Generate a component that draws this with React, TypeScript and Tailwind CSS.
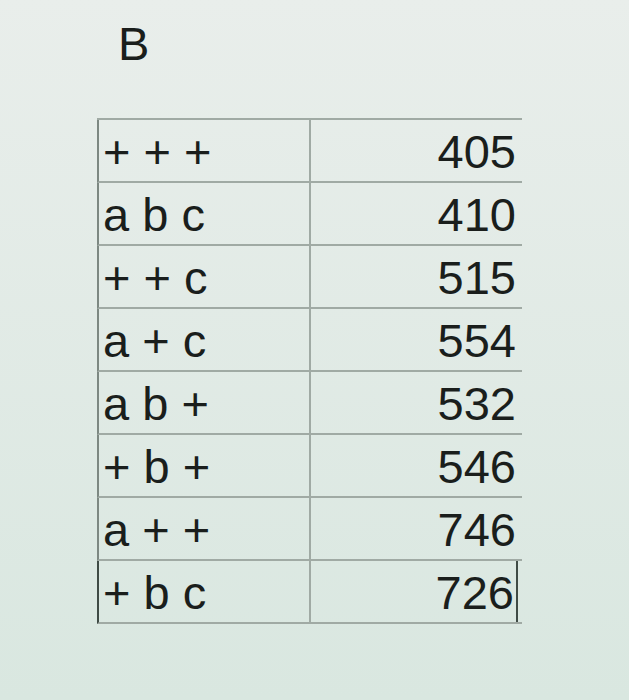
import React from 'react';

const rows: [string, string][] = [
  ['+ + +', '405'],
  ['a b c', '410'],
  ['+ + c', '515'],
  ['a + c', '554'],
  ['a b +', '532'],
  ['+ b +', '546'],
  ['a + +', '746'],
  ['+ b c', '726'],
];

const App: React.FC = () => {
  return (
    <div className="min-h-screen w-full bg-gradient-to-b from-[#e9eeeb] to-[#d9e7e0] text-[#1a1e1c] font-['Liberation_Sans',Arial,sans-serif]">
      {/* heading */}
      <div className="pt-[16px] pl-[118px] text-[47px] leading-[56px]">B</div>

      {/* table */}
      <div className="mt-[46px] ml-[97px] w-[425px] border-t-2 border-[#a0aaa4]">
        {rows.map(([label, value], i) => {
          const last = i === rows.length - 1;
          return (
            <div
              key={i}
              className={`grid grid-cols-[212px_211px] h-[63px] border-b-2 border-b-[#a0aaa4] ${
                last ? 'border-l-2 border-l-[#3f4b45]' : 'border-l-2 border-l-[#7d8882]'
              }`}
            >
              <div className="flex items-center pl-[4px] pt-[3px] border-r-2 border-[#a0aaa4] text-[47px] leading-[56px]">
                {label}
              </div>
              <div className="flex items-center justify-end text-[47px] leading-[56px]">
                {last ? (
                  <div className="flex h-full items-center pt-[3px] pr-[2px] mr-[4px] border-r-2 border-[#3f4b45]">
                    {value}
                  </div>
                ) : (
                  <span className="pt-[3px] pr-[6px]">{value}</span>
                )}
              </div>
            </div>
          );
        })}
      </div>
    </div>
  );
};

export default App;
